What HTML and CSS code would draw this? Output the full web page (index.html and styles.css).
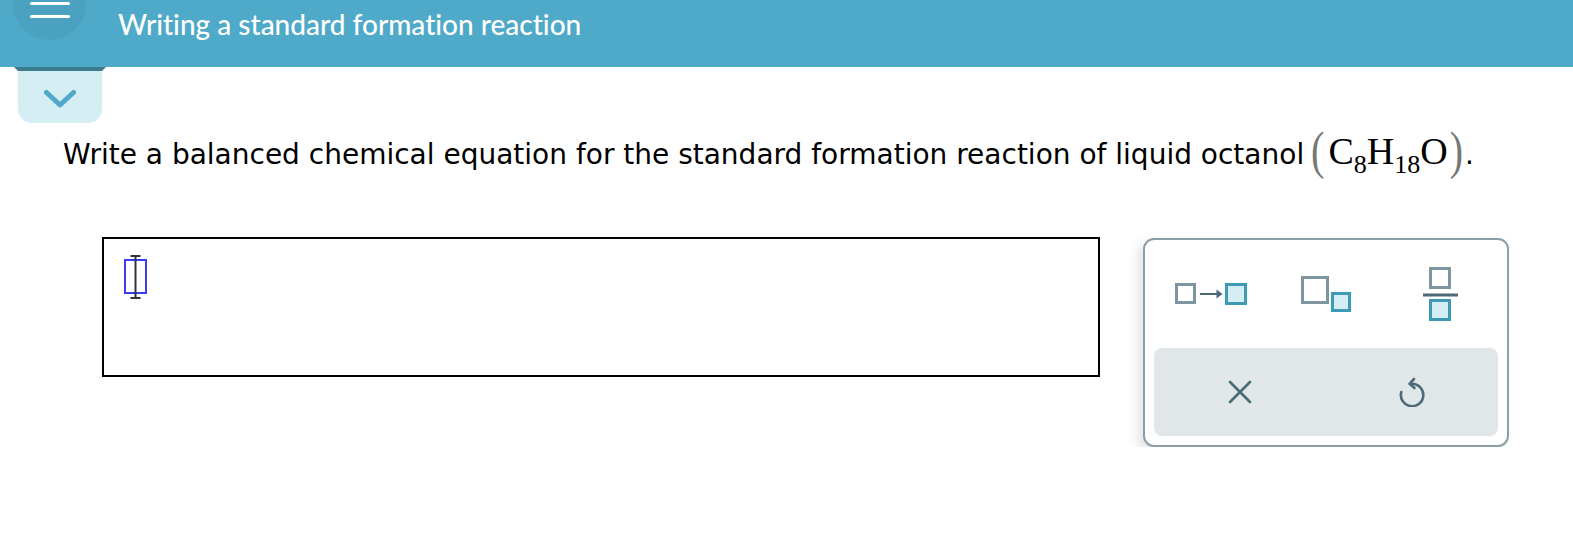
FILE: index.html
```
<!DOCTYPE html>
<html>
<head>
<meta charset="utf-8">
<link rel="stylesheet" href="styles.css">
</head>
<body>
<header class="topbar">
  <div class="menu-btn"><span class="menu-line"></span><span class="menu-line"></span></div>
  <h1 class="title">Writing a standard formation reaction</h1>
</header>
<div class="tab">
  <svg class="chevron" width="34" height="20" viewBox="0 0 34 20"><polyline points="3.5,3.5 17,16 30.5,3.5" fill="none" stroke="#4eaac8" stroke-width="5" stroke-linecap="round" stroke-linejoin="round"/></svg>
</div>
<p class="question">Write a balanced chemical equation for the standard formation reaction of liquid octanol <span class="formula"><span class="paren">(</span><span class="el">C</span><sub class="sub">8</sub><span class="el">H</span><sub class="sub">18</sub><span class="el">O</span><span class="paren">)</span></span>.</p>
<div class="answer-row">
  <div class="answer-box">
    <svg class="cursor" width="24" height="44" viewBox="0 0 24 44"><rect x="1" y="5" width="21" height="33" fill="none" stroke="#3b3bf5" stroke-width="2"/><line x1="11.5" y1="1" x2="11.5" y2="43" stroke="#333" stroke-width="2"/><line x1="6.5" y1="1" x2="16.5" y2="1" stroke="#333" stroke-width="2"/><line x1="6.5" y1="43" x2="16.5" y2="43" stroke="#333" stroke-width="2"/></svg>
  </div>
  <div class="palette">
    <div class="tools">
      <button class="tool"><svg width="72" height="22" viewBox="0 0 72 22"><rect x="1.5" y="1.5" width="18" height="18" fill="#fff" stroke="#7c959f" stroke-width="3"/><line x1="25" y1="11" x2="43" y2="11" stroke="#4c6b78" stroke-width="2"/><polygon points="41.5,6.5 47.5,11 41.5,15.5" fill="#4c6b78"/><rect x="51.5" y="1.5" width="19" height="19" fill="#d5eef4" stroke="#3e9bb6" stroke-width="3"/></svg></button>
      <button class="tool"><svg width="50" height="36" viewBox="0 0 50 36"><rect x="1.5" y="1.5" width="25" height="25" fill="#fff" stroke="#7c959f" stroke-width="3"/><rect x="31.5" y="17.5" width="17" height="17" fill="#d5eef4" stroke="#3e9bb6" stroke-width="3"/></svg></button>
      <button class="tool"><svg width="35" height="54" viewBox="0 0 35 54"><rect x="7.5" y="1.5" width="19" height="19" fill="#fff" stroke="#7c959f" stroke-width="3"/><line x1="0" y1="28" x2="35" y2="28" stroke="#4c6b78" stroke-width="3"/><rect x="7.5" y="33.5" width="19" height="19" fill="#d5eef4" stroke="#3e9bb6" stroke-width="3"/></svg></button>
    </div>
    <div class="actions">
      <button class="action"><svg width="24" height="24" viewBox="0 0 24 24"><path d="M2 2 L22 22 M22 2 L2 22" stroke="#4a6b78" stroke-width="2.6" stroke-linecap="round" fill="none"/></svg></button>
      <button class="action"><svg width="28" height="30" viewBox="0 0 28 30"><path d="M3.3 15 A11.2 11.2 0 1 0 13.5 6.8" fill="none" stroke="#4a6b78" stroke-width="2.6" stroke-linecap="round"/><path d="M16 2 L11.5 6.8 L16.5 11" fill="none" stroke="#4a6b78" stroke-width="2.6" stroke-linecap="round" stroke-linejoin="round"/></svg></button>
    </div>
  </div>
</div>
</body>
</html>
```
FILE: styles.css
```
html, body {
  margin: 0;
  padding: 0;
  background: #fff;
}
body {
  font-family: "DejaVu Sans", Verdana, sans-serif;
  color: #000;
}
.topbar {
  height: 67px;
  background: #4fa9c8;
  display: flex;
  align-items: flex-start;
  overflow: hidden;
}
.menu-btn {
  flex-shrink: 0;
  width: 73px;
  height: 73px;
  margin: -33px 0 0 13px;
  border-radius: 50%;
  background: #4aa2c0;
  box-sizing: border-box;
  display: flex;
  flex-direction: column;
  align-items: center;
  justify-content: flex-end;
  gap: 10px;
  padding-bottom: 22px;
}
.menu-line {
  display: block;
  width: 40px;
  height: 3px;
  border-radius: 2px;
  background: #fff;
}
.title {
  margin: 0 0 0 32px;
  padding-top: 10px;
  font-family: Lato, "Open Sans", sans-serif;
  font-weight: 500;
  font-size: 28px;
  line-height: 28px;
  color: #fff;
  white-space: nowrap;
  font-variant-ligatures: none;
}
.tab {
  position: relative;
  width: 84px;
  height: 56px;
  margin-left: 18px;
  background: #d5eef4;
  border-radius: 0 0 14px 14px;
  display: flex;
  align-items: center;
  justify-content: center;
  padding-top: 8px;
  box-sizing: border-box;
}
.tab::before {
  content: "";
  position: absolute;
  top: 0;
  left: -4px;
  width: 92px;
  height: 4px;
  background: #3a7c8e;
  clip-path: polygon(0 0, 100% 0, calc(100% - 4px) 100%, 4px 100%);
}
.question {
  margin: 4px 0 0 63px;
  font-size: 28px;
  line-height: 48px;
  white-space: nowrap;
}
.formula {
  font-family: "Liberation Serif", "Times New Roman", serif;
  font-size: 38px;
}
.paren {
  display: inline-block;
  color: #777;
  font-size: 40px;
  transform: scaleY(1.3);
  margin: 0 2px;
}
.paren:first-child {
  margin-left: -2px;
  margin-right: 4px;
}
.sub {
  font-size: 26px;
  vertical-align: -9px;
  line-height: 0;
}
.answer-row {
  display: flex;
  align-items: flex-start;
  margin: 58px 0 0 102px;
}
.answer-box {
  width: 998px;
  height: 140px;
  border: 2px solid #000;
  box-sizing: border-box;
  padding: 16px 0 0 20px;
  flex-shrink: 0;
}
.cursor {
  display: block;
}
.palette {
  margin: 1px 0 0 43px;
  width: 366px;
  box-sizing: border-box;
  border: 2px solid #8a9fa8;
  border-radius: 11px;
  background: #fff;
  padding: 0 9px 9px 9px;
  box-shadow: -5px 5px 12px rgba(60, 80, 90, 0.16);
}
.tools {
  display: grid;
  grid-template-columns: repeat(3, 1fr);
  height: 108px;
  align-items: center;
}
.tool, .action {
  border: 0;
  background: transparent;
  padding: 0;
  margin: 0;
  display: flex;
  align-items: center;
  justify-content: center;
}
.tool svg, .action svg {
  display: block;
}
.actions {
  display: grid;
  grid-template-columns: 1fr 1fr;
  height: 88px;
  background: #e1e6e9;
  border-radius: 8px;
  align-items: center;
}
```
